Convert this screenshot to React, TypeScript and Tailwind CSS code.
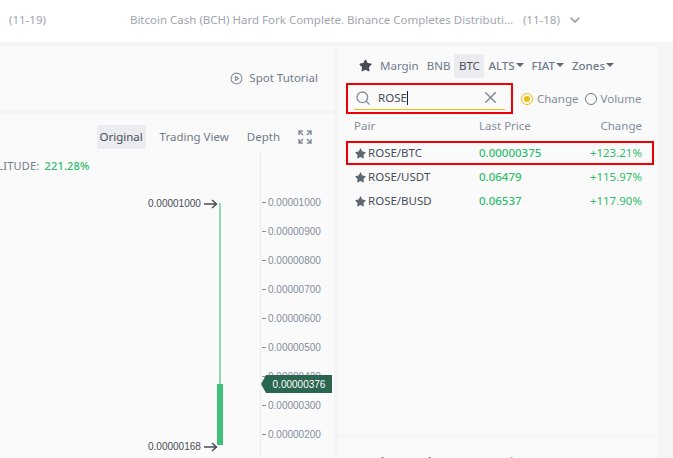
import { FaStar } from "react-icons/fa";
import { FiSearch, FiX, FiChevronDown, FiPlayCircle } from "react-icons/fi";

const ticks = [
    { label: "0.00001000", y: 202 },
    { label: "0.00000900", y: 231 },
    { label: "0.00000800", y: 260 },
    { label: "0.00000700", y: 289 },
    { label: "0.00000600", y: 318 },
    { label: "0.00000500", y: 347 },
    { label: "0.00000400", y: 376 },
    { label: "0.00000300", y: 405 },
    { label: "0.00000200", y: 434 },
];

const pairs = [
    { name: "ROSE/BTC", price: "0.00000375", change: "+123.21%" },
    { name: "ROSE/USDT", price: "0.06479", change: "+115.97%" },
    { name: "ROSE/BUSD", price: "0.06537", change: "+117.90%" },
];

function Caret() {
    return <span className="ml-[1px] inline-block border-x-[4px] border-t-[4px] border-x-transparent border-t-[#5e6673]" />;
}

function Arrow() {
    return (
        <svg width="14" height="10" viewBox="0 0 14 10" fill="none" stroke="#474d57" strokeWidth="1.5">
            <path d="M0 5H12.5M8 1L12.5 5L8 9" />
        </svg>
    );
}

function Chart() {
    return (
        <div className="relative flex-1 overflow-hidden bg-[#fafafa]">
            <div className="flex h-[40px] items-center justify-end pr-[22px] pt-[5px] text-[11.5px] text-[#707a8a]">
                <span className="mr-[14px] flex h-[24px] w-[49px] items-center justify-center rounded-[2px] bg-[#eaecef] text-[#474d57]">Original</span>
                <span className="mr-[18px]">Trading View</span>
                <span className="mr-[18px]">Depth</span>
                <svg width="14" height="14" viewBox="0 0 14 14" fill="none" stroke="#848e9c" strokeWidth="1.5">
                    <path d="M1 5V1H5M9 1H13V5M13 9V13H9M5 13H1V9M1.5 1.5L5 5M12.5 1.5L9 5M12.5 12.5L9 9M1.5 12.5L5 9" />
                </svg>
            </div>
            <div className="absolute left-[-27px] top-[44px] flex gap-[5px] text-[11px] tracking-[0.2px] text-[#707a8a]">
                <span>AMPLITUDE:</span>
                <span className="font-medium text-[#2ebd6b]">221.28%</span>
            </div>
            <div className="absolute left-[260px] top-[40px] bottom-0 w-px bg-[#eaecef]" />
            {ticks.map((t) => (
                <div key={t.label} className="absolute left-[262px] flex h-[12px] items-center font-['Liberation_Sans',sans-serif] text-[10px] text-[#848e9c]" style={{ top: t.y - 120 }}>
                    <span className="mr-[2px] h-px w-[4px] bg-[#848e9c]" />
                    {t.label}
                </div>
            ))}
            <div className="absolute left-[219px] top-[89px] h-[182px] w-[2px] bg-[#8fdcae]" />
            <div className="absolute left-[217px] top-[270px] h-[61px] w-[6px] bg-[#3fc078]" />
            <div className="absolute left-[148px] top-[82px] flex items-center gap-[3px] font-['Liberation_Sans',sans-serif] text-[10px] text-[#474d57]">
                0.00001000 <Arrow />
            </div>
            <div className="absolute left-[148px] top-[325px] flex items-center gap-[3px] font-['Liberation_Sans',sans-serif] text-[10px] text-[#474d57]">
                0.00000168 <Arrow />
            </div>
            <div className="absolute left-[261px] top-[261px] flex h-[18px] items-center">
                <span className="h-0 w-0 border-y-[9px] border-r-[5px] border-y-transparent border-r-[#2a6650]" />
                <span className="flex h-full w-[66px] items-center justify-center bg-[#2a6650] font-['Liberation_Sans',sans-serif] text-[10px] text-white">0.00000376</span>
            </div>
        </div>
    );
}

function Markets() {
    return (
        <div className="h-[388px] bg-[#fafafa] text-[11.5px]">
            <div className="flex h-[32px] items-end text-[#707a8a]">
                <FaStar className="ml-[21px] mb-[6px] text-[13px] text-[#474d57]" />
                <span className="ml-[8px] mb-[4px]">Margin</span>
                <span className="ml-[8px] mb-[4px]">BNB</span>
                <span className="ml-[4px] flex h-[24px] w-[30px] items-center justify-center rounded-[2px] bg-[#eaecef] text-[#474d57]">BTC</span>
                <span className="ml-[4px] mb-[4px] flex items-center font-medium">ALTS<Caret /></span>
                <span className="ml-[8px] mb-[4px] flex items-center font-medium">FIAT<Caret /></span>
                <span className="ml-[8px] mb-[4px] flex items-center font-medium">Zones<Caret /></span>
            </div>
            <div className="mt-[5px] flex items-center">
                <div className="ml-[8px] h-[31px] w-[167px] border-2 border-[#f00000] px-[6px] pt-[1px]">
                    <div className="flex h-[24px] items-center border-b border-[#f0b90b] text-[#707a8a]">
                        <FiSearch className="ml-[1px] text-[16px] text-[#848e9c]" />
                        <span className="ml-[7px] flex items-center text-[#474d57]">ROSE<span className="h-[14px] w-px bg-[#1e2329]" /></span>
                        <FiX className="ml-auto mr-[5px] text-[19px] text-[#848e9c]" />
                    </div>
                </div>
                <span className="ml-[8px] flex h-[12px] w-[12px] items-center justify-center rounded-full border border-[#f0b90b]">
                    <span className="h-[6px] w-[6px] rounded-full bg-[#f0b90b]" />
                </span>
                <span className="ml-[4px] text-[#848e9c]">Change</span>
                <span className="ml-[6px] h-[12px] w-[12px] rounded-full border border-[#707a8a]" />
                <span className="ml-[4px] text-[#848e9c]">Volume</span>
            </div>
            <div className="flex h-[24px] items-center pl-[16px] pr-[16px] text-[#848e9c]">
                <span className="w-[125px]">Pair</span>
                <span>Last Price</span>
                <span className="ml-auto">Change</span>
            </div>
            <div className="mt-[3px] flex flex-col">
                {pairs.map((p, i) => (
                    <div key={p.name} className={`ml-[8px] mr-[4px] flex h-[24px] items-center border-2 pl-[7px] pr-[10px] ${i === 0 ? "border-[#f00000]" : "border-transparent"}`}>
                        <FaStar className="text-[11px] text-[#5e6673]" />
                        <span className="ml-[2px] w-[111px] text-[#474d57]">{p.name}</span>
                        <span className="font-medium text-[#2ebd6b]">{p.price}</span>
                        <span className="ml-auto text-[#2ebd6b]">{p.change}</span>
                    </div>
                ))}
            </div>
        </div>
    );
}

export default function App() {
    return (
        <div className="h-[458px] w-[673px] overflow-hidden bg-[#f5f5f5] font-['Noto_Sans',sans-serif]">
            <div className="flex h-[42px] items-center bg-white pb-[2px] text-[11.5px] text-[#a0a6af]">
                <span className="ml-[9px]">(11-19)</span>
                <span className="ml-[84px] w-[388px] truncate">Bitcoin Cash (BCH) Hard Fork Complete. Binance Completes Distributi...</span>
                <span className="ml-[5px]">(11-18)</span>
                <FiChevronDown className="ml-[7px] text-[16px] text-[#848e9c]" />
            </div>
            <div className="mt-[4px] flex gap-[4px]">
                <div className="flex h-[412px] w-[334px] flex-col gap-[4px]">
                    <div className="flex h-[64px] items-center justify-end bg-[#fafafa] pr-[16px] text-[11.5px] text-[#707a8a]">
                        <FiPlayCircle className="mr-[6px] text-[13px] text-[#848e9c]" />
                        Spot Tutorial
                    </div>
                    <Chart />
                </div>
                <div className="flex w-[320px] flex-col gap-[4px]">
                    <Markets />
                    <div className="h-[40px] bg-[#fafafa] pl-[18px] pt-[15px] text-[13px] font-medium text-[#474d57]">
                        Market Trades <span className="ml-[16px] font-normal text-[#848e9c]">My Trades</span>
                    </div>
                </div>
            </div>
        </div>
    );
}
